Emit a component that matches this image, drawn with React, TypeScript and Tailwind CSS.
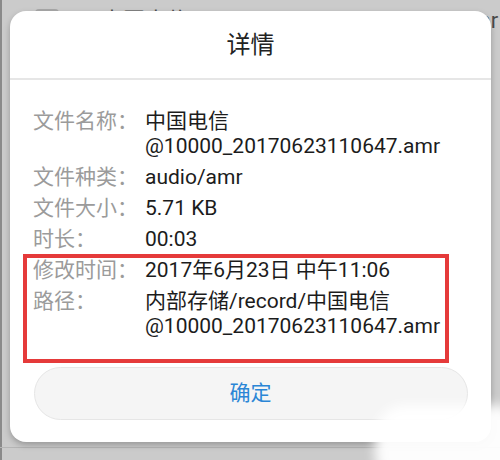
const font = { fontFamily: 'Roboto, "Noto Sans CJK SC", sans-serif' };

function Row({ label, children }: { label: string; children: React.ReactNode }) {
  return (
    <div className="flex text-[21px] leading-[25px]">
      <div className="w-[112px] shrink-0 text-[#9b9b9b]">{label}</div>
      <div className="text-[#1c1c1c]">{children}</div>
    </div>
  );
}

export default function App() {
  return (
    <div className="relative h-[460px] w-[500px] overflow-hidden bg-[#cbcbcb]" style={font}>
      <div className="absolute left-0 top-0 h-full w-[2px] bg-[#8a8a8a]" />
      <div className="flex items-start gap-[42px] pl-[35px] pt-[8px]">
        <div className="mt-[1px] h-[24px] w-[24px] rounded-[4px] border-2 border-[#a8a8a8]" />
        <div className="text-[22px] leading-[26px] text-[#4a4a4a]">中国电信@10000_20170623110647.amr</div>
      </div>
      <div className="absolute bottom-[12px] left-0 h-[1px] w-full bg-[#b5b5b5]" />

      <div className="absolute left-[10px] top-[11px] w-[481px] rounded-[16px] bg-white shadow-[0_3px_6px_rgba(0,0,0,0.25)]">
        <div className="flex h-[67px] items-center justify-center text-[24px] text-[#222]">详情</div>
        <div className="h-[2px] bg-[#e6e6e6]" />
        <div className="flex flex-col gap-[6px] pl-[13px] pr-[20px] pt-[29px]">
          <div className="flex flex-col gap-[6px] pl-[10px]">
            <Row label="文件名称：">
              中国电信
              <br />
              @10000_20170623110647.amr
            </Row>
            <Row label="文件种类：">audio/amr</Row>
            <Row label="文件大小：">5.71 KB</Row>
            <Row label="时长：">00:03</Row>
          </div>
          <div className="mt-[-4px] flex w-[426px] flex-col gap-[6px] border-4 border-[#e53a3a] pb-[20px] pl-[6px]">
            <Row label="修改时间：">2017年6月23日 中午11:06</Row>
            <Row label="路径：">
              内部存储/record/中国电信
              <br />
              @10000_20170623110647.amr
            </Row>
          </div>
        </div>
        <div className="flex justify-center pb-[22px] pt-[4px]">
          <button
            type="button"
            className="flex h-[53px] w-[434px] items-center justify-center rounded-full border border-[#e6e6e6] bg-[#f5f5f5] text-[21px] text-[#2b86d6]"
          >
            确定
          </button>
        </div>
      </div>

      <div className="absolute bottom-[-25px] right-[-25px] h-[80px] w-[150px] rounded-[30px] bg-white/95 blur-[6px]" />
    </div>
  );
}
